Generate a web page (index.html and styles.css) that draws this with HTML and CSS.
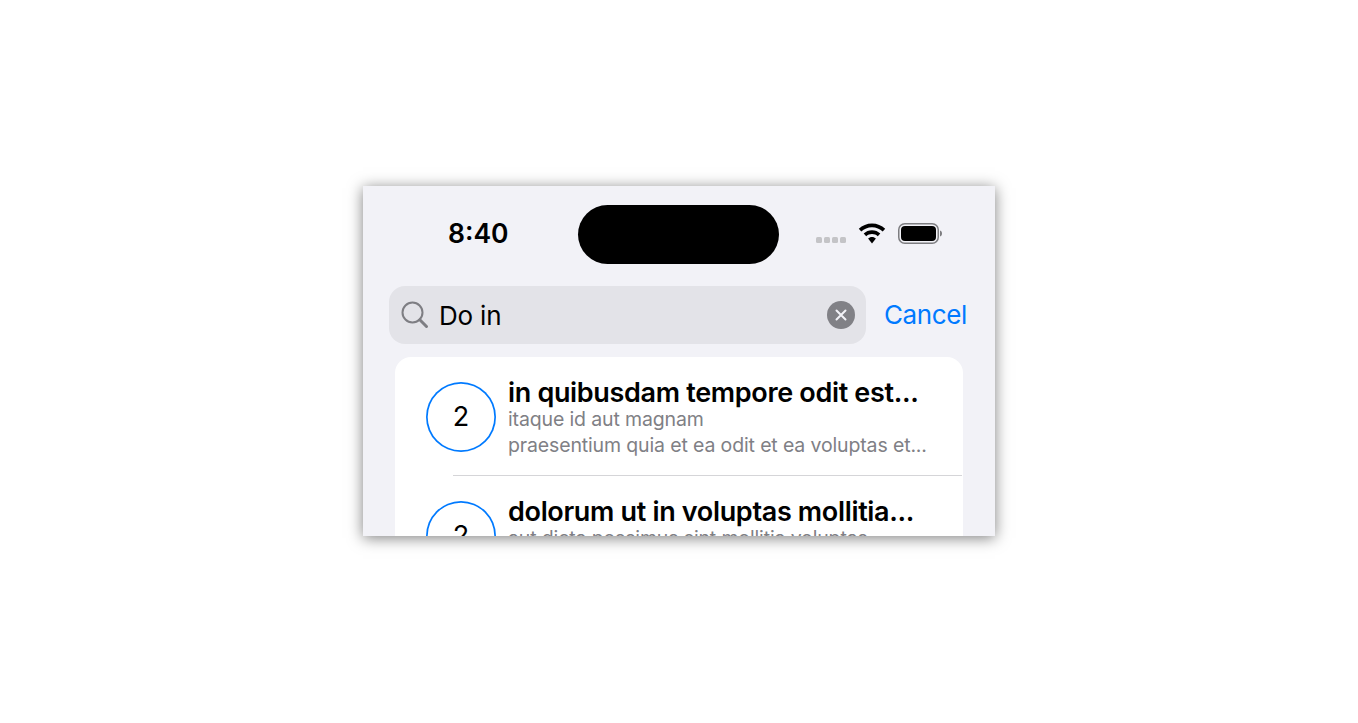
FILE: index.html
```html
<!DOCTYPE html>
<html>
<head>
	<meta charset="utf-8" />
	<title>Search</title>
	<link rel="stylesheet" href="styles.css">
</head>
<body>
	<div class="phone">
		<div class="status">
			<div class="time">8:40</div>
			<div class="island"></div>
			<div class="icons">
				<div class="dots"><i></i><i></i><i></i><i></i></div>
				<svg class="wifi" width="28" height="21" viewBox="0 0 28 21">
					<path d="M14 0.5C8.9 0.5 4.3 2.5 0.8 5.8L3.3 8.5C6.1 5.8 9.9 4.2 14 4.2s7.9 1.6 10.7 4.3l2.5-2.7C23.7 2.5 19.1 0.5 14 0.5z"/>
					<path d="M14 7.2c-3.2 0-6.1 1.2-8.3 3.3l2.5 2.7c1.5-1.4 3.5-2.3 5.8-2.3s4.3 0.9 5.8 2.3l2.5-2.7C20.1 8.4 17.2 7.2 14 7.2z"/>
					<path d="M14 14c-1.5 0-2.9 0.6-3.9 1.6L14 20.5l3.9-4.9C16.9 14.6 15.5 14 14 14z"/>
				</svg>
				<svg class="battery" width="45" height="21" viewBox="0 0 45 21">
					<rect x="0.75" y="0.75" width="39.5" height="19.5" rx="6" fill="none" stroke="#7d7d80" stroke-width="1.5"/>
					<rect x="3" y="3" width="35" height="15" rx="4"/>
					<path d="M42 7.5c1.3 0.4 2 1.5 2 3s-0.7 2.6-2 3z" fill="#7d7d80"/>
				</svg>
			</div>
		</div>
		<div class="search-row">
			<div class="search">
				<svg class="glass" width="28" height="28" viewBox="0 0 28 28" fill="none" stroke="#7e7e83">
					<circle cx="11.5" cy="11.5" r="10" stroke-width="2"/>
					<path d="M18.8 18.8L25.5 25.5" stroke-width="3" stroke-linecap="round"/>
				</svg>
				<span class="query">Do in</span>
				<svg class="clear" width="28" height="28" viewBox="0 0 28 28">
					<circle cx="14" cy="14" r="14" fill="#818186"/>
					<path d="M9.5 9.5L18.5 18.5M18.5 9.5L9.5 18.5" stroke="#f2f2f7" stroke-width="2" stroke-linecap="round"/>
				</svg>
			</div>
			<div class="cancel">Cancel</div>
		</div>
		<div class="list">
			<div class="row">
				<div class="circle">2</div>
				<div class="text">
					<div class="title">in quibusdam tempore odit est...</div>
					<div class="sub">itaque id aut magnam</div>
					<div class="sub">praesentium quia et ea odit et ea voluptas et...</div>
				</div>
			</div>
			<div class="row">
				<div class="circle">2</div>
				<div class="text">
					<div class="title">dolorum ut in voluptas mollitia...</div>
					<div class="sub">aut dicta possimus sint mollitia voluptas</div>
				</div>
			</div>
		</div>
	</div>
</body>
</html>
```

FILE: styles.css
```css
* { margin:0; padding:0; box-sizing:border-box; }
html, body { height:100%; }
body { display:flex; align-items:center; justify-content:center; padding-bottom:1px; background:#fff; font-family:Inter, "Liberation Sans", sans-serif; color:#000; }

.phone { width:632px; height:350px; overflow:hidden; background:#f2f2f7; box-shadow:0 2px 14px rgba(0,0,0,.5); }

.status { display:flex; align-items:flex-start; height:100px; padding-top:19px; }
.time { width:215px; padding-left:85px; font-size:26.5px; line-height:56px; font-weight:600; }
.island { width:201px; height:59px; border-radius:29.5px; background:#000; }
.icons { display:flex; align-items:center; padding:18px 0 0 37px; }
.dots { display:flex; gap:2.5px; margin-top:13px; }
.dots i { display:block; width:5.5px; height:5.5px; border-radius:1.5px; background:#c4c4c7; }
.wifi { margin-left:12px; }
.battery { margin-left:12px; }

.search-row { display:flex; align-items:center; padding-left:26px; }
.search { display:flex; align-items:center; width:477px; height:58px; padding:0 11px 0 12px; border-radius:16px; background:#e3e3e8; }
.query { flex:1; margin-left:10px; font-size:26px; letter-spacing:-.2px; }
.cancel { margin:-2px 0 0 18px; font-size:26px; letter-spacing:-.4px; color:#007aff; }

.list { margin:13px 32px 0; background:#fff; border-radius:16px 16px 0 0; }
.row { display:flex; height:119px; padding:25px 0 0 31px; position:relative; }
.row:first-child::after { content:""; position:absolute; left:58px; right:1px; bottom:0; height:1px; background:#d5d5d8; }
.circle { flex:none; width:70px; height:70px; box-shadow:inset 0 0 0 1.7px #007aff; border-radius:50%; font-size:27px; line-height:69px; text-align:center; }
.text { margin:-2px 0 0 12px; }
.title { font-size:27px; line-height:26px; font-weight:600; letter-spacing:-.33px; white-space:nowrap; }
.sub { font-size:19.5px; line-height:26px; letter-spacing:-.14px; color:#808085; white-space:nowrap; }
```
